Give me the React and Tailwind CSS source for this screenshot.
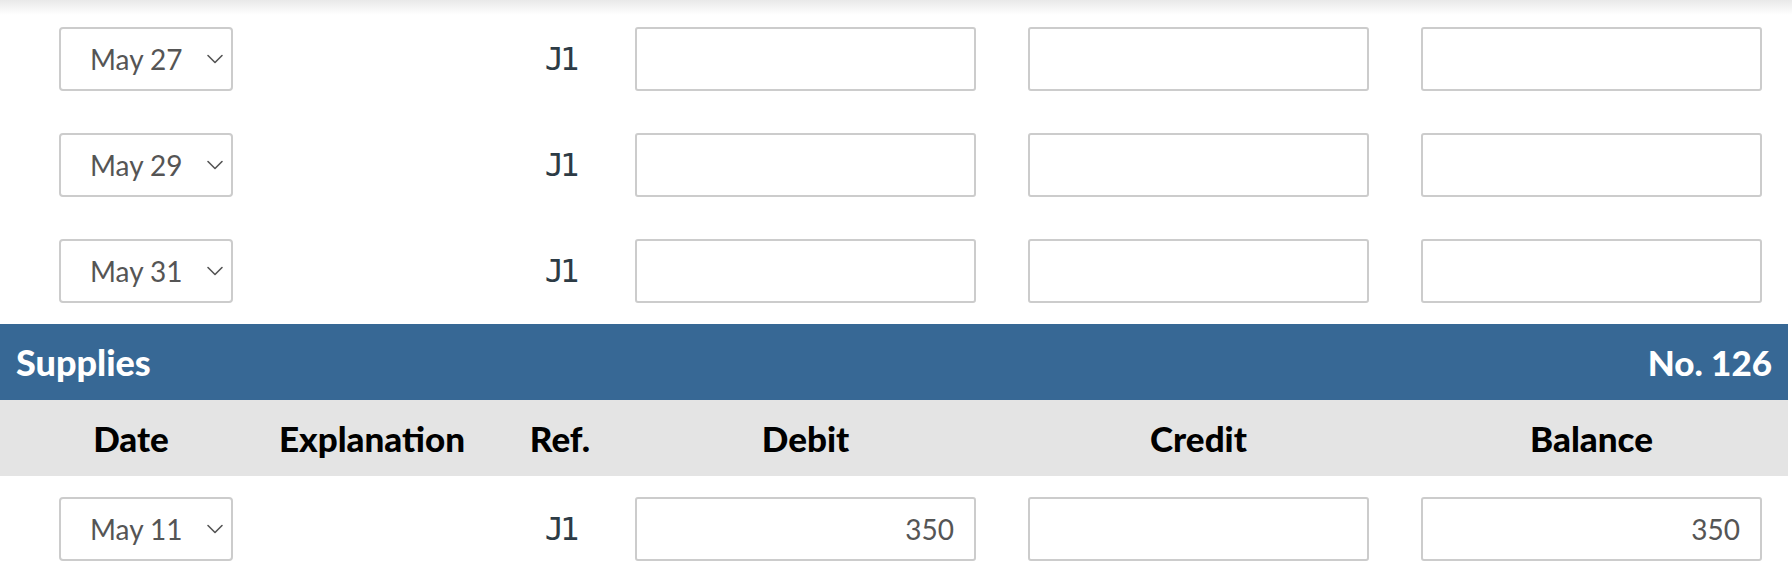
import React from 'react';

const Chevron = () => (
  <svg width="18" height="10" viewBox="0 0 18 10" fill="none" className="shrink-0">
    <path d="M2 1.5 L9 8.5 L16 1.5" stroke="#555555" strokeWidth="1.6" strokeLinecap="round" strokeLinejoin="round" />
  </svg>
);

const DateSelect = ({ value }) => (
  <div className="w-[262px] pl-[59px] shrink-0">
    <div className="w-[174px] h-[64px] border-2 border-[#cccccc] rounded-[4px] bg-white flex items-center justify-between pl-[29px] pr-[7px] text-[28px] text-[#555555]">
      <span>{value}</span>
      <Chevron />
    </div>
  </div>
);

const Amount = ({ value }) => (
  <div className="w-[393px] shrink-0 flex justify-center">
    <div className="w-[341px] h-[64px] border-2 border-[#cccccc] rounded-[3px] bg-white flex items-center justify-end pr-[20px] text-[28px] text-[#555555]">
      {value}
    </div>
  </div>
);

const Row = ({ date, debit = '', credit = '', balance = '' }) => (
  <div className="flex items-center h-[106px]">
    <DateSelect value={date} />
    <div className="w-[220px] shrink-0" />
    <div className="w-[127px] shrink-0 flex justify-center pl-[29px]">
      <span
        className="text-[32px] tracking-[-4px] text-[#2d3b45] leading-none"
        style={{ fontFamily: '"DejaVu Sans Mono", monospace' }}
      >
        J1
      </span>
    </div>
    <Amount value={debit} />
    <Amount value={credit} />
    <Amount value={balance} />
  </div>
);

const App = () => {
  return (
    <div className="relative w-[1792px] h-[576px] overflow-hidden bg-white" style={{ fontFamily: 'Lato, "Noto Sans", sans-serif' }}>
      <div className="absolute top-0 left-0 right-0 h-[15px] bg-gradient-to-b from-[#e9e9e9] to-transparent" />
      <div className="w-[1788px] pt-[6px]">
        <Row date="May 27" />
        <Row date="May 29" />
        <Row date="May 31" />
        <div className="h-[76px] bg-[#376895] flex items-center justify-between px-4 text-white font-black text-[36px]">
          <span>Supplies</span>
          <span className="text-[35px]">No. 126</span>
        </div>
        <div className="h-[76px] bg-[#e4e4e4] flex items-center text-black font-black text-[35px]">
          <div className="w-[262px] shrink-0 text-center">Date</div>
          <div className="w-[220px] shrink-0 text-center">Explanation</div>
          <div className="w-[127px] shrink-0 text-center pl-[29px]">Ref.</div>
          <div className="w-[393px] shrink-0 text-center">Debit</div>
          <div className="w-[393px] shrink-0 text-center">Credit</div>
          <div className="w-[393px] shrink-0 text-center">Balance</div>
        </div>
        <Row date="May 11" debit="350" balance="350" />
      </div>
    </div>
  );
};

export default App;
